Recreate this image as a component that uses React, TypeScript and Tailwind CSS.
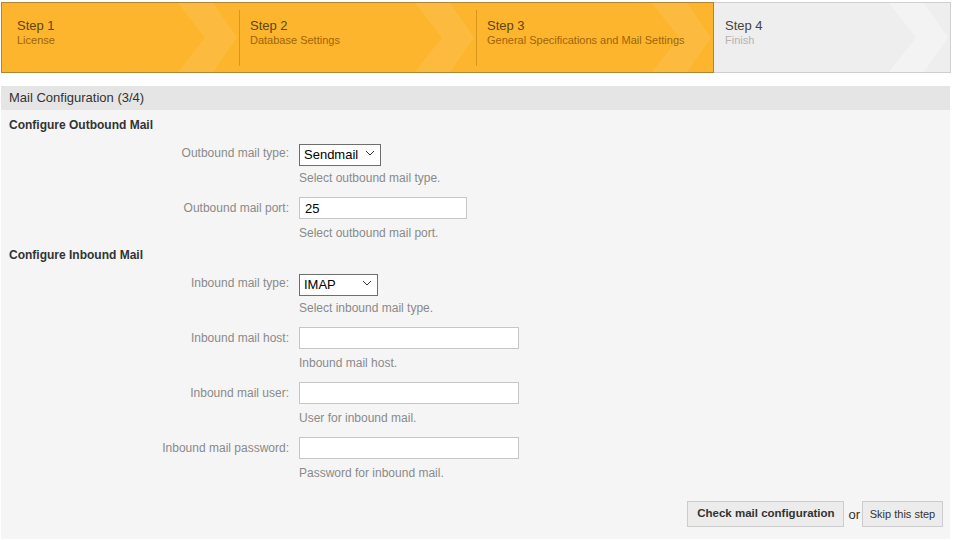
import type { ReactNode } from 'react';

const steps = [
  { title: 'Step 1', sub: 'License' },
  { title: 'Step 2', sub: 'Database Settings' },
  { title: 'Step 3', sub: 'General Specifications and Mail Settings' },
];

function Chevron({ fill }: { fill: string }) {
  return (
    <svg
      className="absolute right-0 top-0 h-full w-[61px]"
      viewBox="0 0 61 68"
      preserveAspectRatio="none"
    >
      <polygon points="0,0 35,0 59,34 35,68 0,68 27,34" fill={fill} />
    </svg>
  );
}

function Step({
  title,
  sub,
  done,
  pad,
}: {
  title: string;
  sub: string;
  done: boolean;
  pad: string;
}) {
  return (
    <div className={`relative flex-1 overflow-hidden pt-[14px] ${pad}`}>
      <Chevron fill={done ? 'rgba(255,255,255,0.09)' : 'rgba(255,255,255,0.3)'} />
      <div
        className={`relative text-[13px] leading-[17px] ${done ? 'text-[#5e4515]' : 'text-[#444]'}`}
      >
        {title}
      </div>
      <div
        className={`relative text-[11px] leading-[13px] ${done ? 'text-[#a0640c]' : 'text-[#b3b3b3]'}`}
      >
        {sub}
      </div>
    </div>
  );
}

function Field({
  label,
  help,
  children,
}: {
  label: string;
  help: string;
  children: ReactNode;
}) {
  return (
    <div className="flex">
      <div className="w-[288px] shrink-0 h-[22px] flex items-center justify-end text-[12px] text-[#8a8a8a]">
        {label}
      </div>
      <div className="ml-[10px]">
        {children}
        <div className="mt-[7px] text-[12px] leading-[14px] text-[#8a8a8a]">{help}</div>
      </div>
    </div>
  );
}

function Select({ value, width }: { value: string; width: string }) {
  return (
    <div className={`relative h-[22px] ${width}`}>
      <select
        defaultValue={value}
        className="h-full w-full appearance-none border border-[#6e6e6e] bg-white pl-[4px] text-[13px] text-black outline-none"
      >
        <option>{value}</option>
      </select>
      <svg
        className="pointer-events-none absolute right-[6px] top-[8px] h-[6px] w-[10px]"
        viewBox="0 0 10 6"
      >
        <polyline points="1,1 5,5 9,1" fill="none" stroke="#333" strokeWidth="1" />
      </svg>
    </div>
  );
}

function Input({ width, value = '' }: { width: string; value?: string }) {
  return (
    <input
      type="text"
      defaultValue={value}
      className={`block h-[22px] ${width} border border-[#c6c6c6] bg-white pl-[5px] text-[13px] text-black outline-none`}
    />
  );
}

export default function App() {
  return (
    <div className="min-h-[540px] bg-white font-['Liberation_Sans',Arial,sans-serif] pt-[2px]">
      {/* wizard steps */}
      <div className="ml-[1px] flex h-[71px] w-[950px]">
        <div className="flex w-[713px] border border-[#ad8537] bg-[#fcb52c]">
          {steps.map((s, i) => (
            <div key={s.title} className="flex flex-1">
              {i > 0 && <div className="w-px self-center h-[56px] bg-[#d8961c]" />}
              <Step title={s.title} sub={s.sub} done pad={i === 0 ? 'pl-[15px]' : 'pl-[10px]'} />
            </div>
          ))}
        </div>
        <div className="flex w-[237px] border border-l-0 border-[#cfcfcf] bg-[#eeeeee]">
          <Step title="Step 4" sub="Finish" done={false} pad="pl-[11px]" />
        </div>
      </div>

      {/* panel */}
      <div className="ml-[1px] mt-[13px] w-[949px] bg-[#f5f5f5] pb-[12px]">
        <div className="h-[24px] bg-[#e5e5e5] pl-[8px] text-[13px] leading-[24px] text-[#333]">
          Mail Configuration (3/4)
        </div>

        <div className="mt-[8px] pl-[8px] text-[12px] font-bold leading-[14px] text-[#333]">
          Configure Outbound Mail
        </div>
        <div className="mt-[10px] flex flex-col gap-[12px]">
          <Field label="Outbound mail type:" help="Select outbound mail type.">
            <Select value="Sendmail" width="w-[82px]" />
          </Field>
          <Field label="Outbound mail port:" help="Select outbound mail port.">
            <Input width="w-[168px]" value="25" />
          </Field>
        </div>

        <div className="mt-[8px] pl-[8px] text-[12px] font-bold leading-[14px] text-[#333]">
          Configure Inbound Mail
        </div>
        <div className="mt-[10px] flex flex-col gap-[12px]">
          <Field label="Inbound mail type:" help="Select inbound mail type.">
            <Select value="IMAP" width="w-[79px]" />
          </Field>
          <Field label="Inbound mail host:" help="Inbound mail host.">
            <Input width="w-[220px]" />
          </Field>
          <Field label="Inbound mail user:" help="User for inbound mail.">
            <Input width="w-[220px]" />
          </Field>
          <Field label="Inbound mail password:" help="Password for inbound mail.">
            <Input width="w-[220px]" />
          </Field>
        </div>

        <div className="mt-[21px] flex items-center justify-end pr-[7px]">
          <button className="h-[26px] w-[157px] border border-[#cccccc] bg-[#ececec] text-[11.5px] font-bold text-[#333]">
            Check mail configuration
          </button>
          <span className="ml-[4px] mr-[2px] text-[13px] leading-[13px] text-[#333]">or</span>
          <button className="h-[26px] w-[81px] border border-[#cccccc] bg-[#ececec] text-[11px] text-[#333]">
            Skip this step
          </button>
        </div>
      </div>
    </div>
  );
}
